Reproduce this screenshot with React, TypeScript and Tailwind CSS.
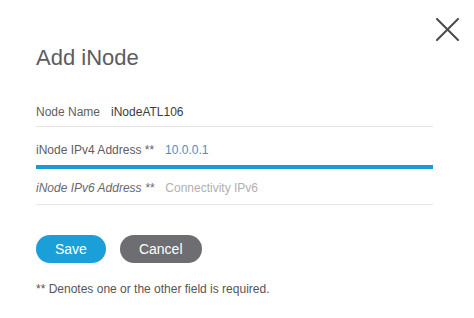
import React from "react";

function CloseIcon() {
  return (
    <svg width="23" height="23" viewBox="0 0 23 23" fill="none">
      <path d="M1 1L22 22M22 1L1 22" stroke="#4a4a4c" strokeWidth="2" strokeLinecap="round" />
    </svg>
  );
}

export default function App() {
  return (
    <div className="relative h-[318px] w-[474px] overflow-hidden bg-white pl-9 pr-[41px] font-['Liberation_Sans',Arial,sans-serif]">
      <button className="absolute right-[15px] top-[18px]" aria-label="Close">
        <CloseIcon />
      </button>

      <h1 className="pt-[45px] text-[22px] font-normal leading-[26px] text-[#5c5c5f]">Add iNode</h1>

      <div className="flex h-[56px] items-end gap-[11px] border-b border-[#e6e6e6] pb-[6px] text-[12px] leading-[15px]">
        <span className="text-[#5e5e60]">Node Name</span>
        <span className="text-[#3c3c3e]">iNodeATL106</span>
      </div>

      <div className="flex h-[42px] items-end gap-[11px] border-b-4 border-[#1a9ad6] pb-[7px] text-[12px] leading-[15px]">
        <span className="text-[#5e5e60]">iNode IPv4 Address **</span>
        <span className="text-[#3b94c8]">10.0.0.1</span>
      </div>

      <div className="flex h-[36px] items-end gap-[11px] border-b border-[#e6e6e6] pb-[8px] text-[12px] leading-[15px]">
        <span className="italic text-[#6a6a6c]">iNode IPv6 Address **</span>
        <span className="text-[#b0b0b2]">Connectivity IPv6</span>
      </div>

      <div className="mt-[30px] flex gap-[14px]">
        <button className="h-[28px] rounded-full bg-[#1a9fd9] px-[19px] text-[14px] text-white">Save</button>
        <button className="h-[28px] rounded-full bg-[#6e6e72] px-[19px] text-[14px] text-white">Cancel</button>
      </div>

      <p className="mt-[19px] text-[12px] leading-[14px] text-[#555557]">
        ** Denotes one or the other field is required.
      </p>
    </div>
  );
}
